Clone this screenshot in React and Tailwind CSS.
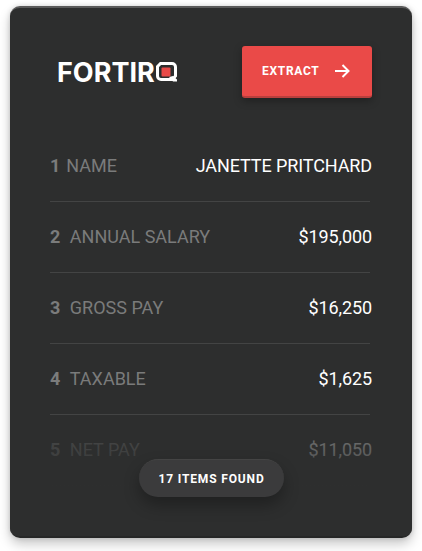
import React from "react";

const rows = [
  ["1", "NAME", "JANETTE PRITCHARD", "mr-[6px]"],
  ["2", "ANNUAL SALARY", "$195,000", "mr-[9.5px]"],
  ["3", "GROSS PAY", "$16,250", "mr-[9.5px]"],
  ["4", "TAXABLE", "$1,625", "mr-[9.5px]"],
  ["5", "NET PAY", "$11,050", "mr-[9.5px]"],
];

export default function App() {
  return (
    <div className="bg-white w-[422px] h-[551px] overflow-hidden pt-[6px] px-[10px] font-['Roboto',sans-serif]">
      <div className="relative w-[402px] h-[532px] rounded-[10px] bg-[#2d2e2e] border-t-2 border-t-[#5a5a5a] border-b-2 border-b-[#262727] shadow-[0_6px_12px_rgba(0,0,0,0.22),0_0_5px_rgba(0,0,0,0.15)] overflow-hidden pl-[40px] pr-[42px] pt-[38px]">
        <div className="flex items-center justify-between h-[52px]">
          <div className="flex items-center ml-[7px] text-white leading-none">
            <span className="font-['Inter',sans-serif] font-bold text-[27px] tracking-[0px]">FORTIR</span>
            <svg width="21" height="20" viewBox="0 0 21 20" className="ml-[1px]">
              <path d="M4.5 1.5H16C18 1.5 19.5 3 19.5 5V14L16.5 17.5H5C3 17.5 1.5 16 1.5 14V4.5Z" fill="none" stroke="#fff" strokeWidth="3" />
              <path d="M13 15L17 19.5H21V17.5L17 14Z" fill="#fff" />
              <rect x="5.5" y="5.5" width="9" height="9" rx="1" fill="#e84a48" />
            </svg>
          </div>
          <div className="w-[130px] h-[52px] -mr-[2px] rounded-[3px] bg-[#ea4a48] border-b-2 border-[#b93f3d] shadow-[0_3px_8px_rgba(0,0,0,0.3)] flex items-center pl-[20px] text-white">
            <span className="text-[12px] font-bold tracking-[0.7px]">EXTRACT</span>
            <svg width="16" height="14" viewBox="0 0 16 14" className="ml-[15px]" fill="none" stroke="#fff" strokeWidth="2">
              <path d="M1 7H14.5M8.5 1L14.5 7L8.5 13" />
            </svg>
          </div>
        </div>
        <div className="mt-[33px]">
          {rows.map(([n, label, value, gap]) => (
            <div key={n} className="h-[71px] flex items-center justify-between border-b border-[#434444] text-[18px] pb-[2px]">
              <div className="flex items-center">
                <span className={`font-bold text-[#7b7c7c] ${gap}`}>{n}</span>
                <span className="text-[#7a7b7b] font-normal">{label}</span>
              </div>
              <span className="text-white font-normal tracking-[-0.1px] -mr-[2px]">{value}</span>
            </div>
          ))}
        </div>
        <div className="absolute left-0 right-0 top-[408px] bottom-0 bg-[linear-gradient(to_bottom,rgba(45,46,46,0)_0%,rgba(45,46,46,0.72)_22%,rgba(45,46,46,0.8)_36%,rgba(45,46,46,1)_60%)]" />
        <div className="absolute left-[129px] top-[451px] w-[145px] h-[38px] rounded-full bg-[#3b3b3c] border-t border-[#444] shadow-[0_8px_16px_rgba(0,0,0,0.3)] flex items-center justify-center text-white text-[12px] font-bold tracking-[0.85px]">
          17 ITEMS FOUND
        </div>
      </div>
    </div>
  );
}
